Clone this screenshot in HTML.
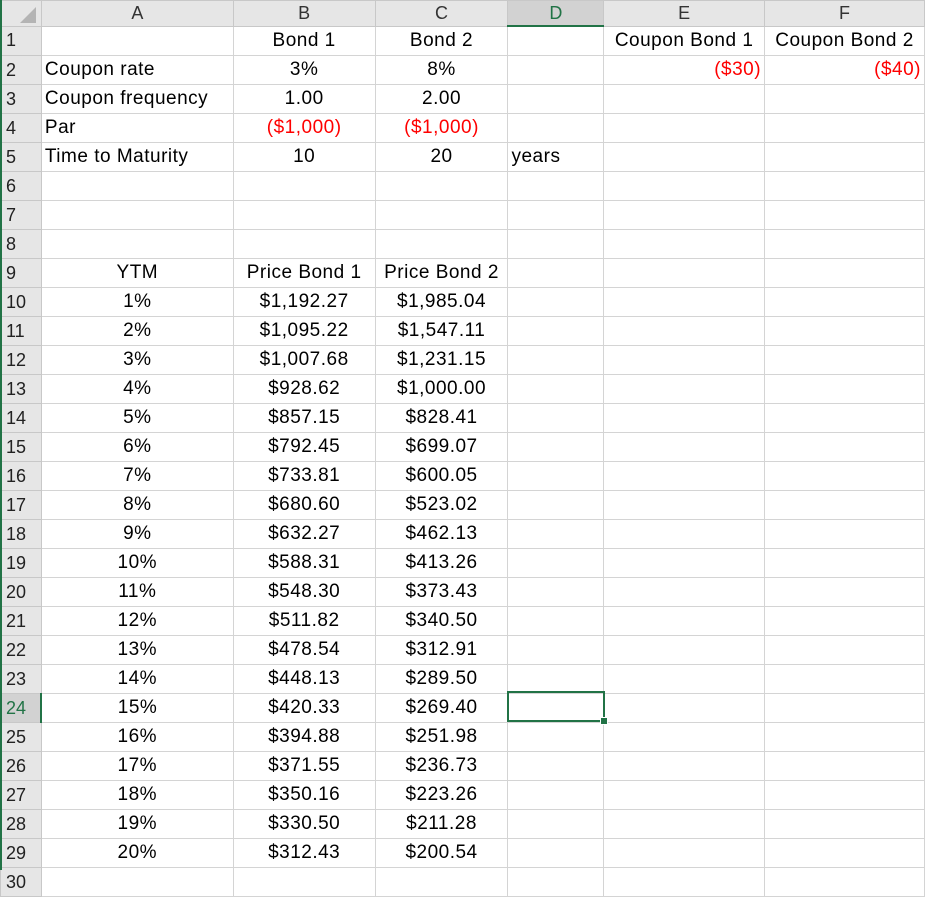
<!DOCTYPE html>
<html><head><style>
body{margin:0;width:925px;height:870px;overflow:hidden;background:#fff;font-family:"Liberation Sans",sans-serif;}
table{border-collapse:collapse;table-layout:fixed;position:absolute;left:0;top:0;}
td{border:1px solid #d4d4d4;height:28px;padding:0 3px;font-size:19px;letter-spacing:0.5px;white-space:nowrap;overflow:visible;color:#000;}
tr.h td{height:24px;background:#e6e6e6;text-align:center;color:#333;border-color:#c8c8c8;font-size:18px;letter-spacing:0}
td.rh{background:#e6e6e6;text-align:left;padding-left:5px;color:#222;border-color:#c8c8c8;font-size:18px;letter-spacing:0}
.c{text-align:center}.r{text-align:right}.red{color:#f00}
</style></head><body>
<div style="position:absolute;left:0;top:0;width:2px;height:870px;background:#217346;z-index:3"></div>
<table>
<colgroup><col style="width:41px"><col style="width:192px"><col style="width:142px"><col style="width:133px"><col style="width:96px"><col style="width:161px"><col style="width:160px"></colgroup>
<tr class="h"><td style="position:relative"><svg width="22" height="22" style="position:absolute;right:3px;bottom:1px"><polygon points="20,4 20,20 4,20" fill="#b4b4b4"/></svg></td><td>A</td><td>B</td><td>C</td><td style="background:#d2d2d2;color:#217346;border-bottom:2px solid #217346">D</td><td>E</td><td>F</td></tr>
<tr><td class="rh">1</td><td></td><td class="c">Bond 1</td><td class="c">Bond 2</td><td></td><td class="c">Coupon Bond 1</td><td class="c">Coupon Bond 2</td></tr>
<tr><td class="rh">2</td><td>Coupon rate</td><td class="c">3%</td><td class="c">8%</td><td></td><td class="r red">($30)</td><td class="r red">($40)</td></tr>
<tr><td class="rh">3</td><td>Coupon frequency</td><td class="c">1.00</td><td class="c">2.00</td><td></td><td></td><td></td></tr>
<tr><td class="rh">4</td><td>Par</td><td class="c red">($1,000)</td><td class="c red">($1,000)</td><td></td><td></td><td></td></tr>
<tr><td class="rh">5</td><td>Time to Maturity</td><td class="c">10</td><td class="c">20</td><td>years</td><td></td><td></td></tr>
<tr><td class="rh">6</td><td></td><td></td><td></td><td></td><td></td><td></td></tr>
<tr><td class="rh">7</td><td></td><td></td><td></td><td></td><td></td><td></td></tr>
<tr><td class="rh">8</td><td></td><td></td><td></td><td></td><td></td><td></td></tr>
<tr><td class="rh">9</td><td class="c">YTM</td><td class="c">Price Bond 1</td><td class="c">Price Bond 2</td><td></td><td></td><td></td></tr>
<tr><td class="rh">10</td><td class="c">1%</td><td class="c">$1,192.27</td><td class="c">$1,985.04</td><td></td><td></td><td></td></tr>
<tr><td class="rh">11</td><td class="c">2%</td><td class="c">$1,095.22</td><td class="c">$1,547.11</td><td></td><td></td><td></td></tr>
<tr><td class="rh">12</td><td class="c">3%</td><td class="c">$1,007.68</td><td class="c">$1,231.15</td><td></td><td></td><td></td></tr>
<tr><td class="rh">13</td><td class="c">4%</td><td class="c">$928.62</td><td class="c">$1,000.00</td><td></td><td></td><td></td></tr>
<tr><td class="rh">14</td><td class="c">5%</td><td class="c">$857.15</td><td class="c">$828.41</td><td></td><td></td><td></td></tr>
<tr><td class="rh">15</td><td class="c">6%</td><td class="c">$792.45</td><td class="c">$699.07</td><td></td><td></td><td></td></tr>
<tr><td class="rh">16</td><td class="c">7%</td><td class="c">$733.81</td><td class="c">$600.05</td><td></td><td></td><td></td></tr>
<tr><td class="rh">17</td><td class="c">8%</td><td class="c">$680.60</td><td class="c">$523.02</td><td></td><td></td><td></td></tr>
<tr><td class="rh">18</td><td class="c">9%</td><td class="c">$632.27</td><td class="c">$462.13</td><td></td><td></td><td></td></tr>
<tr><td class="rh">19</td><td class="c">10%</td><td class="c">$588.31</td><td class="c">$413.26</td><td></td><td></td><td></td></tr>
<tr><td class="rh">20</td><td class="c">11%</td><td class="c">$548.30</td><td class="c">$373.43</td><td></td><td></td><td></td></tr>
<tr><td class="rh">21</td><td class="c">12%</td><td class="c">$511.82</td><td class="c">$340.50</td><td></td><td></td><td></td></tr>
<tr><td class="rh">22</td><td class="c">13%</td><td class="c">$478.54</td><td class="c">$312.91</td><td></td><td></td><td></td></tr>
<tr><td class="rh">23</td><td class="c">14%</td><td class="c">$448.13</td><td class="c">$289.50</td><td></td><td></td><td></td></tr>
<tr><td class="rh" style="background:#d2d2d2;color:#217346;border-right:2px solid #217346">24</td><td class="c">15%</td><td class="c">$420.33</td><td class="c">$269.40</td><td></td><td></td><td></td></tr>
<tr><td class="rh">25</td><td class="c">16%</td><td class="c">$394.88</td><td class="c">$251.98</td><td></td><td></td><td></td></tr>
<tr><td class="rh">26</td><td class="c">17%</td><td class="c">$371.55</td><td class="c">$236.73</td><td></td><td></td><td></td></tr>
<tr><td class="rh">27</td><td class="c">18%</td><td class="c">$350.16</td><td class="c">$223.26</td><td></td><td></td><td></td></tr>
<tr><td class="rh">28</td><td class="c">19%</td><td class="c">$330.50</td><td class="c">$211.28</td><td></td><td></td><td></td></tr>
<tr><td class="rh">29</td><td class="c">20%</td><td class="c">$312.43</td><td class="c">$200.54</td><td></td><td></td><td></td></tr>
<tr><td class="rh">30</td><td></td><td></td><td></td><td></td><td></td><td></td></tr>
</table>
<div style="position:absolute;left:507px;top:691px;width:94px;height:27px;border:2px solid #217346;z-index:2"></div>
<div style="position:absolute;left:600px;top:717px;width:6px;height:6px;background:#217346;border:1px solid #fff;z-index:3"></div>
</body></html>
